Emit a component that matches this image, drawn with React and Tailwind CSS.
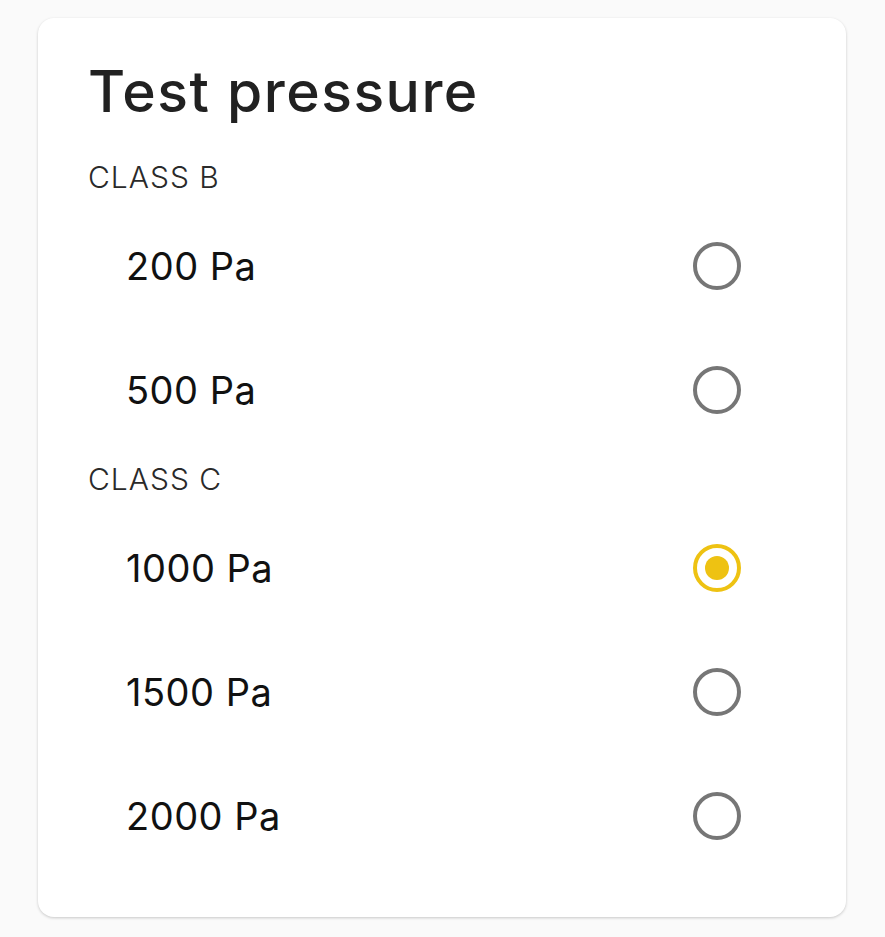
import React from "react";

const font = { fontFamily: '"Inter", "Noto Sans", sans-serif' };

function Radio({ checked }) {
  if (checked) {
    return (
      <div className="w-[48px] h-[48px] rounded-full border-[4px] border-[#eec212] flex items-center justify-center">
        <div className="w-[24px] h-[24px] rounded-full bg-[#eec212]" />
      </div>
    );
  }
  return <div className="w-[48px] h-[48px] rounded-full border-[4px] border-[#767676]" />;
}

function Row({ label, checked }) {
  return (
    <div className="h-[124px] flex items-center justify-between pl-[88px] pr-[105px]">
      <span className="text-[38px] text-[#111111] tracking-[0.5px]">{label}</span>
      <Radio checked={checked} />
    </div>
  );
}

function Header({ children }) {
  return (
    <div className="h-[54px] flex items-center pl-[50px]">
      <span className="text-[30px] font-light text-[#2a2a2a] tracking-[1px]">{children}</span>
    </div>
  );
}

export default function App() {
  return (
    <div className="min-h-[937px] bg-[#fafafa] pt-[18px] px-[38px]" style={font}>
      <div className="w-[808px] bg-white rounded-[16px] shadow-[0_1px_3px_rgba(0,0,0,0.2)] pb-[39px]">
        <div className="h-[132px] flex items-end pl-[50px] pb-[28px]">
          <h1 className="text-[57px] leading-[60px] font-medium text-[#212121] tracking-[1.5px]">Test pressure</h1>
        </div>
        <Header>CLASS B</Header>
        <Row label="200 Pa" />
        <Row label="500 Pa" />
        <Header>CLASS C</Header>
        <Row label="1000 Pa" checked />
        <Row label="1500 Pa" />
        <Row label="2000 Pa" />
      </div>
    </div>
  );
}
